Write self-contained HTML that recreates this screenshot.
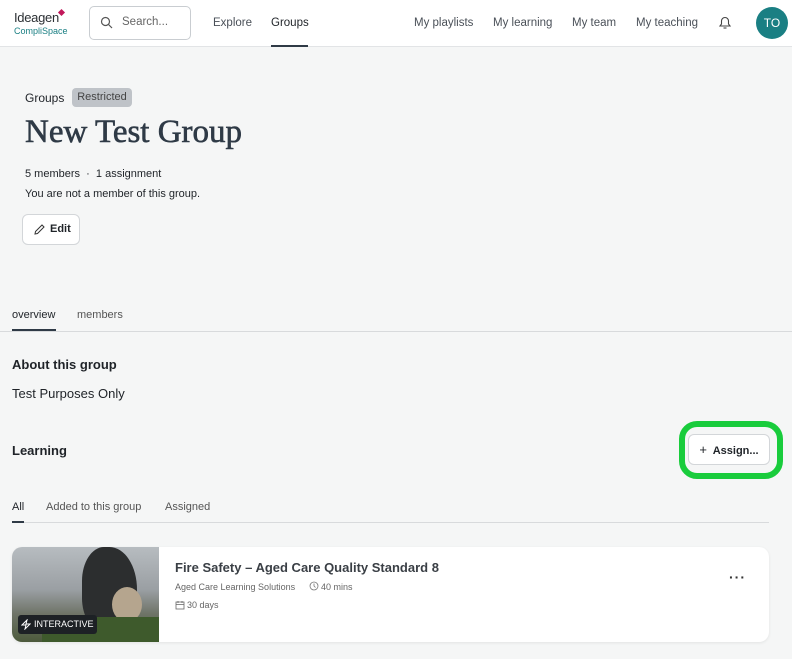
<!DOCTYPE html>
<html><head><meta charset="utf-8"><style>
*{margin:0;padding:0;box-sizing:border-box}
body{width:792px;height:659px;overflow:hidden;background:#f5f6f6;font-family:"Liberation Sans",sans-serif;color:#1f2328;position:relative}
.a{position:absolute;white-space:nowrap}
.hdr{position:absolute;left:0;top:0;width:792px;height:47px;background:#fff;border-bottom:1px solid #e2e4e6}
.nav{font-size:11.5px;color:#4a5058}
</style></head><body>
<div class="hdr"></div>
<div class="a" style="left:14px;top:10px;font-size:13px;color:#2b2f33;letter-spacing:-0.3px">Ideagen</div>
<div class="a" style="left:59px;top:10px;width:5px;height:5px;background:#c2185b;transform:rotate(45deg)"></div>
<div class="a" style="left:14px;top:26px;font-size:9px;color:#1a7f83">CompliSpace</div>
<div class="a" style="left:89px;top:6px;width:102px;height:34px;border:1px solid #c9cdd1;border-radius:5px;background:#fff"></div>
<svg class="a" style="left:100px;top:16px" width="13" height="13" viewBox="0 0 13 13"><circle cx="5.5" cy="5.5" r="4" fill="none" stroke="#555" stroke-width="1.2"/><path d="M8.5 8.5L12 12" stroke="#555" stroke-width="1.2"/></svg>
<div class="a nav" style="left:122px;top:16px;color:#666">Search...</div>
<div class="a nav" style="left:213px;top:17px">Explore</div>
<div class="a nav" style="left:271px;top:17px;color:#1f2328">Groups</div>
<div class="a" style="left:271px;top:45px;width:37px;height:2px;background:#2f3a46"></div>
<div class="a nav" style="left:414px;top:17px">My playlists</div>
<div class="a nav" style="left:493px;top:17px">My learning</div>
<div class="a nav" style="left:572px;top:17px">My team</div>
<div class="a nav" style="left:636px;top:17px">My teaching</div>
<svg class="a" style="left:717px;top:14px" width="16" height="16" viewBox="0 0 16 16"><path d="M3 12h10l-1.5-2V7a3.5 3.5 0 0 0-7 0v3z" fill="none" stroke="#444" stroke-width="1.1"/><path d="M6.5 14h3" stroke="#444" stroke-width="1.1"/></svg>
<div class="a" style="left:756px;top:7px;width:32px;height:32px;border-radius:50%;background:#1a7f83;color:#fff;font-size:12px;line-height:32px;text-align:center">TO</div>

<div class="a" style="left:25px;top:91px;font-size:12px">Groups</div>
<div class="a" style="left:72px;top:88px;width:60px;height:19px;background:#bfc3c8;border-radius:4px;font-size:11px;color:#444;line-height:19px;text-align:center">Restricted</div>
<div class="a" style="left:25px;top:114px;font-family:'Liberation Serif',serif;font-size:33px;color:#2f3a46;-webkit-text-stroke:0.6px #2f3a46">New Test Group</div>
<div class="a" style="left:25px;top:168px;font-size:11px">5 members &nbsp;·&nbsp; 1 assignment</div>
<div class="a" style="left:25px;top:188px;font-size:11px">You are not a member of this group.</div>
<div class="a" style="left:22px;top:214px;width:58px;height:31px;background:#fff;border:1px solid #d3d6d9;border-radius:6px"></div>
<svg class="a" style="left:34px;top:224px" width="11" height="11" viewBox="0 0 11 11"><path d="M1 10l.5-2.5L8 1l2 2-6.5 6.5z" fill="none" stroke="#333" stroke-width="1"/></svg>
<div class="a" style="left:50px;top:223px;font-size:11px;font-weight:bold">Edit</div>

<div class="a" style="left:12px;top:309px;font-size:11px">overview</div>
<div class="a" style="left:12px;top:329px;width:44px;height:2px;background:#2f3a46"></div>
<div class="a" style="left:77px;top:309px;font-size:11px;color:#555">members</div>
<div class="a" style="left:0;top:331px;width:792px;height:1px;background:#d8dadc"></div>
<div class="a" style="left:12px;top:357px;font-size:13px;font-weight:bold;color:#1f2328">About this group</div>
<div class="a" style="left:12px;top:386px;font-size:13px">Test Purposes Only</div>
<div class="a" style="left:12px;top:443px;font-size:13px;font-weight:bold">Learning</div>
<div class="a" style="left:679px;top:421px;width:104px;height:58px;border:6px solid #19cc3c;border-radius:18px"></div>
<div class="a" style="left:688px;top:434px;width:82px;height:31px;background:#fff;border:1px solid #d3d6d9;border-radius:6px;font-size:11px;font-weight:bold;line-height:29px;text-align:center"><span style="font-weight:normal;font-size:13px">+</span>&nbsp; Assign...</div>

<div class="a" style="left:12px;top:501px;font-size:11px">All</div>
<div class="a" style="left:46px;top:501px;font-size:11px;color:#555">Added to this group</div>
<div class="a" style="left:165px;top:501px;font-size:11px;color:#555">Assigned</div>
<div class="a" style="left:12px;top:522px;width:757px;height:1px;background:#d8dadc"></div>
<div class="a" style="left:12px;top:521px;width:12px;height:2px;background:#2f3a46"></div>

<div class="a" style="left:12px;top:547px;width:757px;height:95px;background:#fff;border-radius:10px;box-shadow:0 1px 3px rgba(0,0,0,.08);overflow:hidden">
<div style="position:absolute;left:0;top:0;width:147px;height:95px;background:linear-gradient(180deg,#b7bcc0 0%,#9a9fa3 45%,#6f7468 70%,#4c5a3c 100%)"></div>
<div style="position:absolute;left:70px;top:0;width:55px;height:85px;background:#2c2e2f;border-radius:40% 50% 30% 40%"></div>
<div style="position:absolute;left:100px;top:40px;width:30px;height:35px;background:#b5a58e;border-radius:50%"></div>
<div style="position:absolute;left:30px;top:70px;width:117px;height:25px;background:#3e5a2c"></div>
<div style="position:absolute;left:6px;top:68px;width:79px;height:19px;background:#1d2125;border-radius:3px;color:#fff;font-size:9px;line-height:19px;padding-left:16px">INTERACTIVE</div>
<svg style="position:absolute;left:9px;top:72px" width="10" height="11" viewBox="0 0 10 11"><path d="M6 1L1 6h4l-1 4 5-5H5z" fill="none" stroke="#fff" stroke-width="1"/></svg>
</div>
<div class="a" style="left:175px;top:560px;font-size:13px;font-weight:bold;color:#3a3f45">Fire Safety – Aged Care Quality Standard 8</div>
<div class="a" style="left:175px;top:582px;font-size:9px;color:#666">Aged Care Learning Solutions</div>
<svg class="a" style="left:309px;top:581px" width="10" height="10" viewBox="0 0 10 10"><circle cx="5" cy="5" r="4" fill="none" stroke="#777" stroke-width=".8"/><path d="M5 2.5V5l1.5 1.5" fill="none" stroke="#777" stroke-width=".8"/></svg>
<div class="a" style="left:321px;top:582px;font-size:9px;color:#666">40 mins</div>
<svg class="a" style="left:175px;top:600px" width="10" height="10" viewBox="0 0 10 10"><rect x="1" y="2" width="8" height="7" fill="none" stroke="#666" stroke-width=".8"/><path d="M1 4.5h8M3 1v2M7 1v2" stroke="#666" stroke-width=".8"/></svg>
<div class="a" style="left:187px;top:600px;font-size:9px;color:#666">30 days</div>
<div class="a" style="left:729px;top:569px;font-size:14px;font-weight:bold;color:#333;letter-spacing:1px">···</div>
</body></html>
